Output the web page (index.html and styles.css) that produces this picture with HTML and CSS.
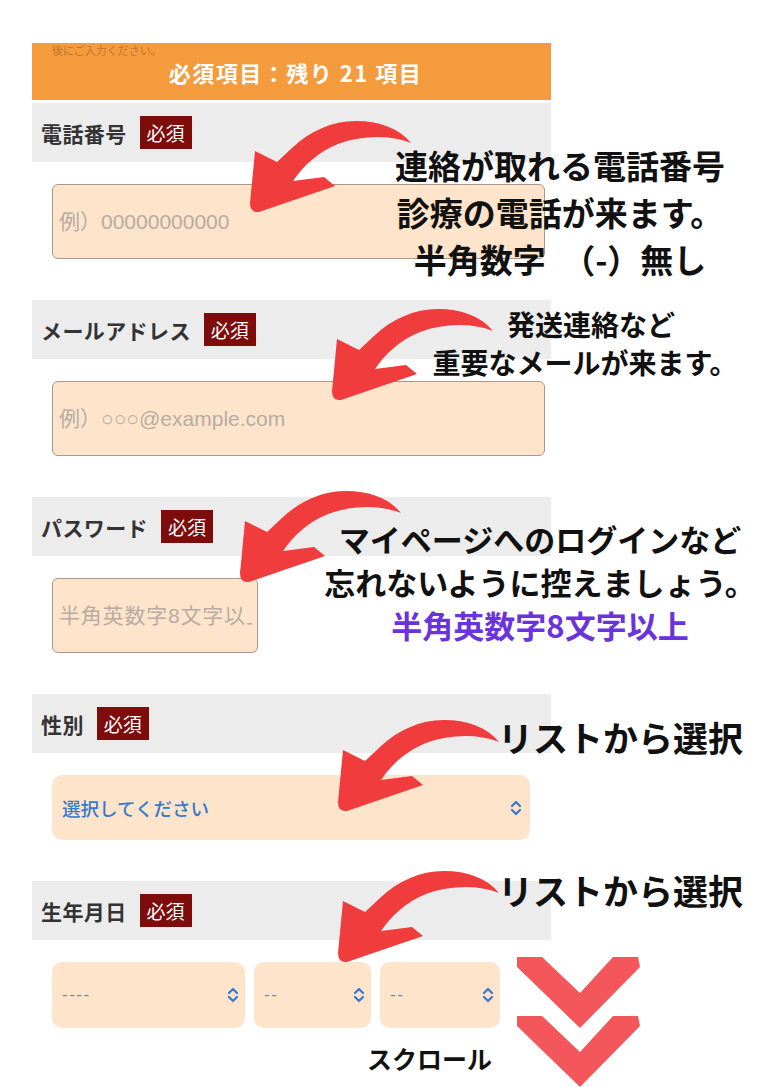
FILE: index.html
```html
<!DOCTYPE html>
<html lang="ja">
<head>
<meta charset="utf-8">
<title>会員登録フォーム</title>
<link rel="stylesheet" href="styles.css">
</head>
<body>
<svg class="defs" width="0" height="0" aria-hidden="true">
  <symbol id="curl" viewBox="0 0 170 100">
    <path d="M163 25 C151 10 131 3 108 3 C84 3 62 13 44 30 L29 44 L7 33 L2 85 Q2 95 11 94 L87 68 L76 59 L45 63 C55 48 70 34 90 26 C115 17 142 17 163 25 Z"/>
  </symbol>
  <symbol id="updown" viewBox="0 0 12 18">
    <path d="M2 7 L6 3 L10 7 M2 11 L6 15 L10 11" fill="none" stroke-width="2.2" stroke-linecap="round" stroke-linejoin="round"/>
  </symbol>
</svg>

<div class="page">
  <div class="form">
    <div class="banner">
      <div class="banner-note">後にご入力ください。</div>
      <div class="banner-title">必須項目：残り 21 項目</div>
    </div>

    <section class="field">
      <div class="field-head"><span class="label">電話番号</span><span class="badge">必須</span></div>
      <div class="field-body"><input class="text-input wide" type="text" placeholder="例）00000000000"></div>
    </section>

    <section class="field">
      <div class="field-head"><span class="label">メールアドレス</span><span class="badge">必須</span></div>
      <div class="field-body"><input class="text-input wide" type="text" placeholder="例）○○○@example.com"></div>
    </section>

    <section class="field">
      <div class="field-head"><span class="label">パスワード</span><span class="badge">必須</span></div>
      <div class="field-body"><input class="text-input narrow" type="text" placeholder="半角英数字8文字以上"></div>
    </section>

    <section class="field">
      <div class="field-head"><span class="label">性別</span><span class="badge">必須</span></div>
      <div class="field-body">
        <div class="select gender"><span class="select-text">選択してください</span><svg class="updown"><use href="#updown"/></svg></div>
      </div>
    </section>

    <section class="field last">
      <div class="field-head"><span class="label">生年月日</span><span class="badge">必須</span></div>
      <div class="field-body date-row">
        <div class="select year"><span class="select-text dash">----</span><svg class="updown"><use href="#updown"/></svg></div>
        <div class="select month"><span class="select-text dash">--</span><svg class="updown"><use href="#updown"/></svg></div>
        <div class="select day"><span class="select-text dash">--</span><svg class="updown"><use href="#updown"/></svg></div>
      </div>
    </section>
  </div>

  <svg class="arrow a1"><use href="#curl"/></svg>
  <svg class="arrow a2"><use href="#curl"/></svg>
  <svg class="arrow a3"><use href="#curl"/></svg>
  <svg class="arrow a4"><use href="#curl"/></svg>
  <svg class="arrow a5"><use href="#curl"/></svg>

  <div class="note n-phone">
    <p>連絡が取れる電話番号</p>
    <p>診療の電話が来ます。</p>
    <p>半角数字　（-）無し</p>
  </div>
  <div class="note n-mail">
    <p class="sm">発送連絡など</p>
    <p>重要なメールが来ます。</p>
  </div>
  <div class="note n-pass">
    <p>マイページへのログインなど</p>
    <p>忘れないように控えましょう。</p>
    <p class="purple">半角英数字8文字以上</p>
  </div>
  <div class="note n-list n-list1">リストから選択</div>
  <div class="note n-list n-list2">リストから選択</div>
  <div class="note n-scroll">スクロール</div>

  <svg class="scroll-chev" viewBox="0 0 127 135">
    <polygon points="2,2 27,2 65,38 98,2 123,2 125,12 65,73 2,12"/>
    <polygon points="2,61 27,61 65,97 98,61 123,61 125,71 65,132 2,71"/>
  </svg>
</div>
</body>
</html>
```
FILE: styles.css
```css
* { box-sizing: border-box; }

html, body {
  margin: 0;
  padding: 0;
  background: #ffffff;
}

body {
  font-family: "Noto Sans CJK JP", "Noto Sans", "Liberation Sans", sans-serif;
  color: #222;
}

.defs {
  position: absolute;
  width: 0;
  height: 0;
  overflow: hidden;
}

.page {
  position: relative;
  width: 768px;
  height: 1087px;
  overflow: hidden;
}

.form {
  margin: 43px 0 0 32px;
  width: 519px;
}

/* banner */
.banner {
  height: 57px;
  background: #f49c3d;
  margin-bottom: 3px;
}

.banner-note {
  font-size: 11px;
  line-height: 14px;
  height: 14px;
  padding-left: 20px;
  color: #bf7531;
}

.banner-title {
  height: 30px;
  line-height: 30px;
  text-align: center;
  color: #ffffff;
  font-size: 22px;
  font-weight: 700;
  letter-spacing: 1.5px;
  padding-left: 8px;
}

/* field */
.field-head {
  height: 59px;
  background: #ececec;
  display: flex;
  align-items: center;
  gap: 13px;
  padding-left: 9px;
}

.label {
  font-size: 21px;
  font-weight: 700;
  letter-spacing: 0.4px;
  color: #333;
}

.badge {
  display: inline-flex;
  align-items: center;
  justify-content: center;
  height: 33px;
  padding: 0 7px;
  background: #7d0c0b;
  color: #ffffff;
  font-size: 19px;
  font-weight: 400;
}

.field-body {
  padding: 22px 0 41px 20px;
}

.field.last .field-body {
  padding-bottom: 0;
}

.text-input {
  display: block;
  height: 75px;
  background: #fde4cb;
  border: 1.5px solid #a7978a;
  border-radius: 6px;
  padding: 0 5px 0 6px;
  font-family: "Liberation Sans", "Noto Sans CJK JP", sans-serif;
  font-size: 21px;
  color: #333;
  outline: none;
}

.text-input::placeholder {
  color: #b7aca3;
  opacity: 1;
}

.text-input.wide { width: 493px; }
.text-input.narrow {
  width: 206px;
  letter-spacing: 0.8px;
}

.select {
  display: flex;
  align-items: center;
  justify-content: space-between;
  background: #fde4cb;
  border-radius: 10px;
  padding: 0 8px 0 10px;
}

.select.gender {
  width: 478px;
  height: 65px;
}

.select-text {
  font-size: 18.5px;
  font-weight: 500;
  color: #3479cf;
}

.select-text.dash {
  font-family: "Liberation Sans", sans-serif;
  font-size: 17px;
  letter-spacing: 1.5px;
  color: #5f8cc8;
}

.updown {
  width: 12px;
  height: 18px;
  stroke: #3b78cf;
}

.date-row {
  display: flex;
  gap: 9px;
}

.date-row .select {
  height: 66px;
  padding-right: 6px;
}

.select.year { width: 193px; }
.select.month { width: 117px; }
.select.day { width: 120px; }

/* annotation overlays */
.arrow {
  position: absolute;
  width: 170px;
  height: 100px;
  fill: #f03c3c;
}

.a1 { left: 248px; top: 118px; }
.a2 { left: 330px; top: 306px; }
.a3 { left: 238px; top: 488px; }
.a4 { left: 336px; top: 717px; }
.a5 { left: 336px; top: 868px; }

.note {
  position: absolute;
  font-weight: 700;
  color: #111;
  white-space: nowrap;
}

.note p {
  margin: 0;
}

.n-phone {
  left: 370px;
  top: 142px;
  width: 380px;
  text-align: center;
  font-size: 33px;
  line-height: 47px;
}

.n-mail {
  left: 410px;
  top: 305px;
  width: 350px;
  text-align: center;
  font-size: 28px;
  line-height: 38px;
}

.n-mail .sm {
  padding-left: 12px;
}

.n-pass {
  left: 310px;
  top: 517px;
  width: 460px;
  text-align: center;
  font-size: 31px;
  line-height: 43px;
}

.purple {
  color: #6a33dc;
}

.n-list {
  left: 498px;
  font-size: 35px;
  line-height: 40px;
}

.n-list1 { top: 717px; }
.n-list2 { top: 870px; }

.n-scroll {
  left: 367px;
  top: 1040px;
  font-size: 25px;
  line-height: 36px;
}

.scroll-chev {
  position: absolute;
  left: 515px;
  top: 955px;
  width: 127px;
  height: 135px;
  fill: #f3575b;
}
```
